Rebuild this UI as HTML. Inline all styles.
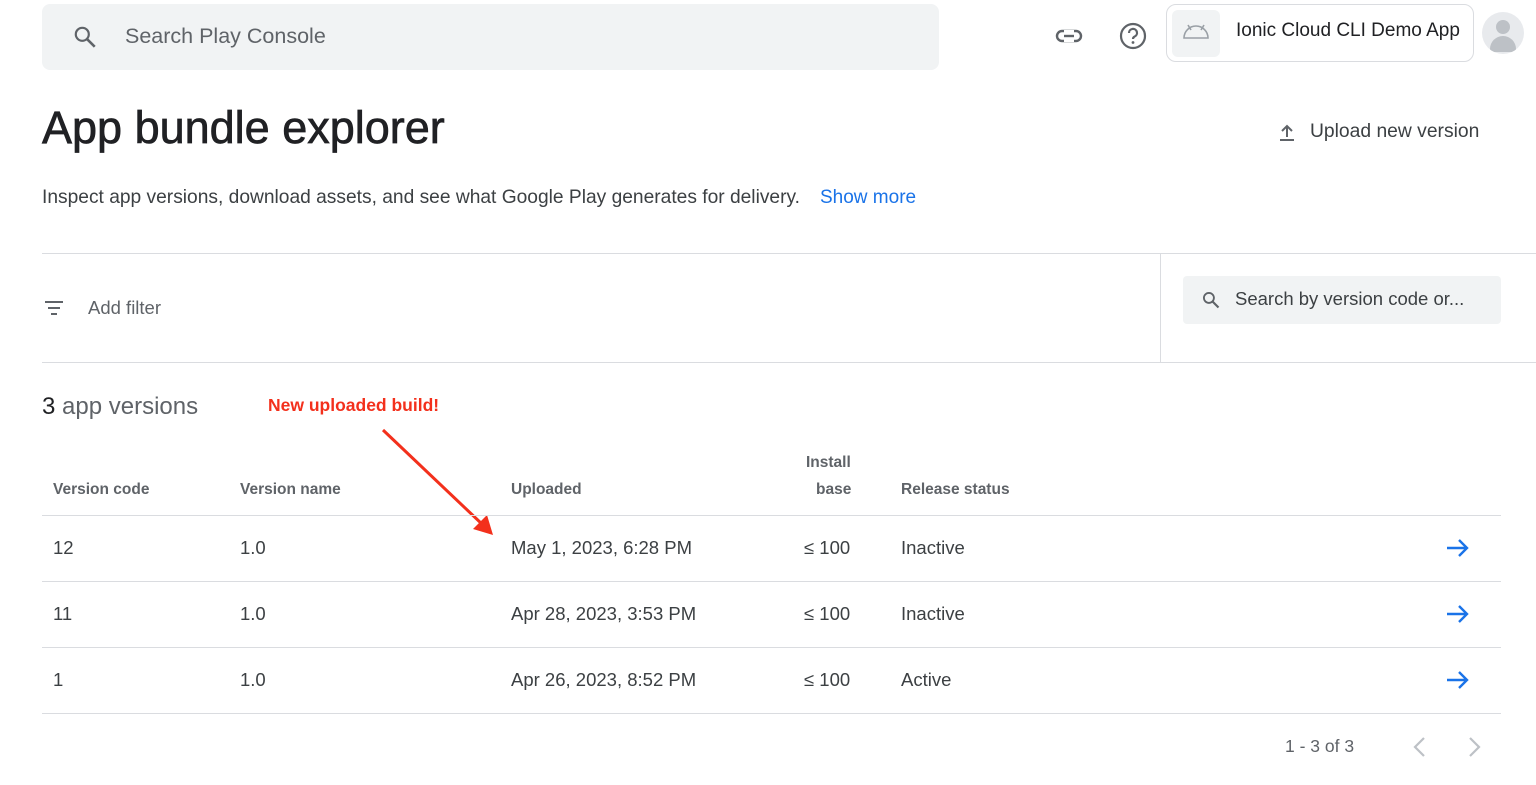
<!DOCTYPE html>
<html><head><meta charset="utf-8">
<style>
*{margin:0;padding:0;box-sizing:border-box}
body{width:1536px;height:785px;background:#fff;font-family:"Liberation Sans",Arial,sans-serif;color:#202124;position:relative;overflow:hidden}
.a{position:absolute}
.hdr{font-size:15.5px;color:#5f6368;font-weight:bold}
.cell{font-size:18.5px;color:#3c4043}
.line{position:absolute;left:42px;width:1459px;height:1px;background:#dadce0}
</style></head><body>
<div class="a" style="left:42px;top:4px;width:897px;height:66px;background:#f1f3f4;border-radius:8px"></div>
<svg class="a" style="left:72px;top:24px" width="26" height="26" viewBox="0 0 24 24"><circle cx="9.5" cy="9.5" r="6" fill="none" stroke="#5f6368" stroke-width="2"/><path d="M14 14l7 7" stroke="#5f6368" stroke-width="2.4"/></svg>
<div class="a" style="left:125px;top:24px;font-size:21.5px;color:#5f6368">Search Play Console</div>
<svg class="a" style="left:1054px;top:22px" width="30" height="28" viewBox="0 0 30 28"><rect x="3" y="9" width="24" height="10" rx="5" fill="none" stroke="#5f6368" stroke-width="2.4"/><rect x="10" y="8" width="10" height="12" fill="#fff"/><path d="M10 14h10" stroke="#5f6368" stroke-width="2.4"/></svg>
<svg class="a" style="left:1118px;top:21px" width="30" height="30" viewBox="0 0 30 30"><circle cx="15" cy="15" r="12" fill="none" stroke="#5f6368" stroke-width="2.2"/><path d="M11 12a4 4 0 1 1 5.5 3.6c-1 .5-1.5 1-1.5 2.4" fill="none" stroke="#5f6368" stroke-width="2.2"/><circle cx="15" cy="21.5" r="1.4" fill="#5f6368"/></svg>
<div class="a" style="left:1166px;top:4px;width:308px;height:58px;border:1px solid #dadce0;border-radius:10px"></div>
<div class="a" style="left:1172px;top:10px;width:48px;height:47px;background:#f1f3f4;border-radius:6px"></div>
<svg class="a" style="left:1181px;top:22px" width="30" height="20" viewBox="0 0 30 20"><path d="M3 16a12 12 0 0 1 24 0z" fill="none" stroke="#9aa0a6" stroke-width="1.6"/><path d="M7 3l3 5M23 3l-3 5" stroke="#9aa0a6" stroke-width="1.6"/></svg>
<div class="a" style="left:1236px;top:20px;font-size:19px;color:#202124">Ionic Cloud CLI Demo App</div>
<div class="a" style="left:1482px;top:12px;width:42px;height:42px;border-radius:50%;background:#e8eaed;overflow:hidden"><div class="a" style="left:14px;top:8px;width:14px;height:14px;border-radius:50%;background:#bdc1c6"></div><div class="a" style="left:8px;top:24px;width:26px;height:16px;border-radius:13px 13px 0 0;background:#bdc1c6"></div></div>

<div class="a" style="left:42px;top:102px;font-size:45px;color:#202124;-webkit-text-stroke:0.7px #202124">App bundle explorer</div>
<svg class="a" style="left:1277px;top:123px" width="20" height="20" viewBox="0 0 20 20"><path d="M10 14V4M5 8l5-5 5 5M3 17h14" fill="none" stroke="#5f6368" stroke-width="2"/></svg>
<div class="a" style="left:1310px;top:121px;font-size:19.3px;color:#3c4043">Upload new version</div>
<div class="a" style="left:42px;top:187px;font-size:19.2px;color:#3c4043">Inspect app versions, download assets, and see what Google Play generates for delivery.</div>
<div class="a" style="left:820px;top:187px;font-size:19px;color:#1a73e8">Show more</div>

<div class="a" style="left:42px;top:253px;width:1494px;height:1px;background:#dadce0"></div>
<div class="a" style="left:42px;top:362px;width:1494px;height:1px;background:#dadce0"></div>
<div class="a" style="left:1160px;top:253px;width:1px;height:110px;background:#dadce0"></div>
<svg class="a" style="left:44px;top:300px" width="20" height="16" viewBox="0 0 20 16"><path d="M1 2h18M4 8h12M7 14h6" stroke="#5f6368" stroke-width="2"/></svg>
<div class="a" style="left:88px;top:297px;font-size:18.5px;color:#5f6368">Add filter</div>
<div class="a" style="left:1183px;top:276px;width:318px;height:48px;background:#f1f3f4;border-radius:4px"></div>
<svg class="a" style="left:1201px;top:290px" width="20" height="20" viewBox="0 0 24 24"><circle cx="9.5" cy="9.5" r="6" fill="none" stroke="#5f6368" stroke-width="2.2"/><path d="M14 14l7 7" stroke="#5f6368" stroke-width="2.6"/></svg>
<div class="a" style="left:1235px;top:288px;font-size:18.5px;color:#3c4043">Search by version code or...</div>

<div class="a" style="left:42px;top:393px;font-size:24px;color:#5f6368"><b style="color:#202124;font-weight:normal">3</b> app versions</div>
<div class="a" style="left:268px;top:395px;font-size:17.5px;color:#f3301c;font-weight:bold">New uploaded build!</div>
<svg class="a" style="left:378px;top:425px" width="120" height="115" viewBox="0 0 120 115"><path d="M5 5L105 100" stroke="#f3301c" stroke-width="3"/><path d="M115 110L95 104L109 90z" fill="#f3301c"/></svg>

<div class="a hdr" style="left:53px;top:481px">Version code</div>
<div class="a hdr" style="left:240px;top:481px">Version name</div>
<div class="a hdr" style="left:511px;top:481px">Uploaded</div>
<div class="a hdr" style="left:806px;top:454px">Install</div>
<div class="a hdr" style="left:816px;top:481px">base</div>
<div class="a hdr" style="left:901px;top:481px">Release status</div>
<div class="line" style="top:515px"></div>
<div class="line" style="top:581px"></div>
<div class="line" style="top:647px"></div>
<div class="line" style="top:713px"></div>

<div class="a cell" style="left:53px;top:537px">12</div><div class="a cell" style="left:240px;top:537px">1.0</div><div class="a cell" style="left:511px;top:537px">May 1, 2023, 6:28 PM</div><div class="a cell" style="left:804px;top:537px">≤ 100</div><div class="a cell" style="left:901px;top:537px">Inactive</div>
<div class="a cell" style="left:53px;top:603px">11</div><div class="a cell" style="left:240px;top:603px">1.0</div><div class="a cell" style="left:511px;top:603px">Apr 28, 2023, 3:53 PM</div><div class="a cell" style="left:804px;top:603px">≤ 100</div><div class="a cell" style="left:901px;top:603px">Inactive</div>
<div class="a cell" style="left:53px;top:669px">1</div><div class="a cell" style="left:240px;top:669px">1.0</div><div class="a cell" style="left:511px;top:669px">Apr 26, 2023, 8:52 PM</div><div class="a cell" style="left:804px;top:669px">≤ 100</div><div class="a cell" style="left:901px;top:669px">Active</div>

<svg class="a" style="left:1445px;top:538px" width="26" height="20" viewBox="0 0 26 20"><path d="M2 10h20M14 2l8 8-8 8" fill="none" stroke="#1a73e8" stroke-width="2.4"/></svg>
<svg class="a" style="left:1445px;top:604px" width="26" height="20" viewBox="0 0 26 20"><path d="M2 10h20M14 2l8 8-8 8" fill="none" stroke="#1a73e8" stroke-width="2.4"/></svg>
<svg class="a" style="left:1445px;top:670px" width="26" height="20" viewBox="0 0 26 20"><path d="M2 10h20M14 2l8 8-8 8" fill="none" stroke="#1a73e8" stroke-width="2.4"/></svg>

<div class="a" style="left:1285px;top:736px;font-size:17.5px;color:#5f6368">1 - 3 of 3</div>
<svg class="a" style="left:1410px;top:735px" width="20" height="24" viewBox="0 0 20 24"><path d="M14 3l-9 9 9 9" fill="none" stroke="#bdc1c6" stroke-width="2.2"/></svg>
<svg class="a" style="left:1464px;top:735px" width="20" height="24" viewBox="0 0 20 24"><path d="M6 3l9 9-9 9" fill="none" stroke="#bdc1c6" stroke-width="2.2"/></svg>
</body></html>
